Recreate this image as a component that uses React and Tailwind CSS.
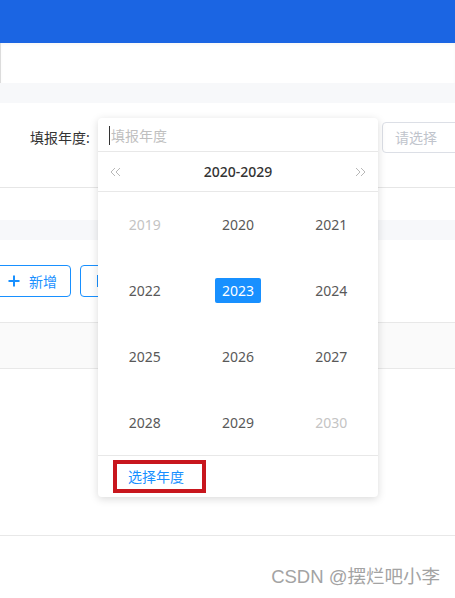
import React from "react";

const years = [
  { y: "2019", dim: true },
  { y: "2020" },
  { y: "2021" },
  { y: "2022" },
  { y: "2023", sel: true },
  { y: "2024" },
  { y: "2025" },
  { y: "2026" },
  { y: "2027" },
  { y: "2028" },
  { y: "2029" },
  { y: "2030", dim: true },
];

function DoubleChevron({ right }) {
  return (
    <svg width="11" height="10" viewBox="0 0 11 10" className={right ? "rotate-180" : ""}>
      <path d="M5 1 L1 5 L5 9 M10 1 L6 5 L10 9" fill="none" stroke="#b8b8b8" strokeWidth="1" />
    </svg>
  );
}

function YearPanel() {
  return (
    <div className="absolute left-[98px] top-[118px] w-[280px] h-[379px] bg-white rounded-[4px] shadow-[0_2px_8px_rgba(0,0,0,0.15)] flex flex-col">
      <div className="h-[34px] shrink-0 border-b border-[#e8e8e8] flex items-center pl-[11px] pt-[2px]">
        <span className="w-px h-[19px] bg-[#333] mr-[1px]" />
        <span className="text-[14px] text-[#bfbfbf] leading-none">填报年度</span>
      </div>
      <div className="h-[40px] shrink-0 border-b border-[#e8e8e8] flex items-center justify-between pl-[12px] pr-[12px]">
        <DoubleChevron />
        <span className="text-[14px] font-medium text-[#333]">2020-2029</span>
        <DoubleChevron right />
      </div>
      <div className="flex-1 grid grid-cols-3 grid-rows-4">
        {years.map((c) => (
          <div key={c.y} className="flex items-center justify-center">
            {c.sel ? (
              <span className="w-[46px] h-[25px] rounded-[2px] bg-[#1890ff] text-white text-[14px] flex items-center justify-center">
                {c.y}
              </span>
            ) : (
              <span className={c.dim ? "text-[14px] text-[#c4c4c4]" : "text-[14px] text-[#595959]"}>{c.y}</span>
            )}
          </div>
        ))}
      </div>
      <div className="h-[42px] shrink-0 border-t border-[#e8e8e8] pl-[15px] pt-[4px]">
        <div className="w-[93px] h-[33px] border-[4px] border-[#c8161d] flex items-center pl-[11px]">
          <span className="text-[14px] text-[#1890ff]">选择年度</span>
        </div>
      </div>
    </div>
  );
}

export default function App() {
  return (
    <div
      className="relative w-[455px] h-[598px] overflow-hidden bg-white"
      style={{ fontFamily: '"Noto Sans", "Noto Sans CJK SC", sans-serif' }}
    >
      <div className="h-[43px] bg-[#1b65e3]" />
      <div className="h-[40px] bg-white border-l border-[#dcdcdc] shadow-[inset_0_2px_3px_rgba(0,0,0,0.03)]" />
      <div className="h-[20px] bg-[#f7f8fa]" />
      <div className="h-[85px] border-b border-[#e6e6e6] pt-[19px] pl-[30px] flex items-start">
        <div className="h-[31px] w-[68px] shrink-0 whitespace-nowrap flex items-center text-[14px] text-[#333]">填报年度:</div>
        <div className="h-[31px] w-[276px] shrink-0 border border-[#dcdfe6] rounded-[4px]" />
        <div className="h-[31px] w-[120px] ml-[8px] border border-[#dcdfe6] rounded-[4px] flex items-center pl-[12px] text-[14px] text-[#c0c4cc] shrink-0 whitespace-nowrap">
          请选择
        </div>
      </div>
      <div className="h-[32px]" />
      <div className="h-[20px] bg-[#f7f8fa]" />
      <div className="pt-[25px] flex">
        <div className="ml-[-8px] w-[79px] h-[32px] border border-[#1890ff] rounded-[4px] flex items-center pl-[15px] text-[#1890ff] shrink-0">
          <svg width="12" height="12" viewBox="0 0 12 12" className="mr-[9px]">
            <path d="M6 0.5v11M0.5 6h11" stroke="#1890ff" strokeWidth="2" />
          </svg>
          <span className="text-[14px]">新增</span>
        </div>
        <div className="ml-[9px] w-[79px] h-[32px] border border-[#1890ff] rounded-[4px] flex items-center pl-[16px] shrink-0">
          <span className="w-[2px] h-[12px] bg-[#1890ff]" />
        </div>
      </div>
      <div className="mt-[25px] h-[47px] bg-[#fafafa] border-y border-[#e8e8e8]" />
      <div className="h-[167px] border-b border-[#e8e8e8]" />
      <YearPanel />
      <div
        className="absolute right-[15px] top-[568px] text-[18.5px] leading-none text-[#a3a3a3] whitespace-nowrap"
        style={{ fontFamily: '"Liberation Sans", "Noto Sans CJK SC", sans-serif', textShadow: "1px 1px 1px rgba(255,255,255,0.9)" }}
      >
        CSDN @摆烂吧小李
      </div>
    </div>
  );
}
